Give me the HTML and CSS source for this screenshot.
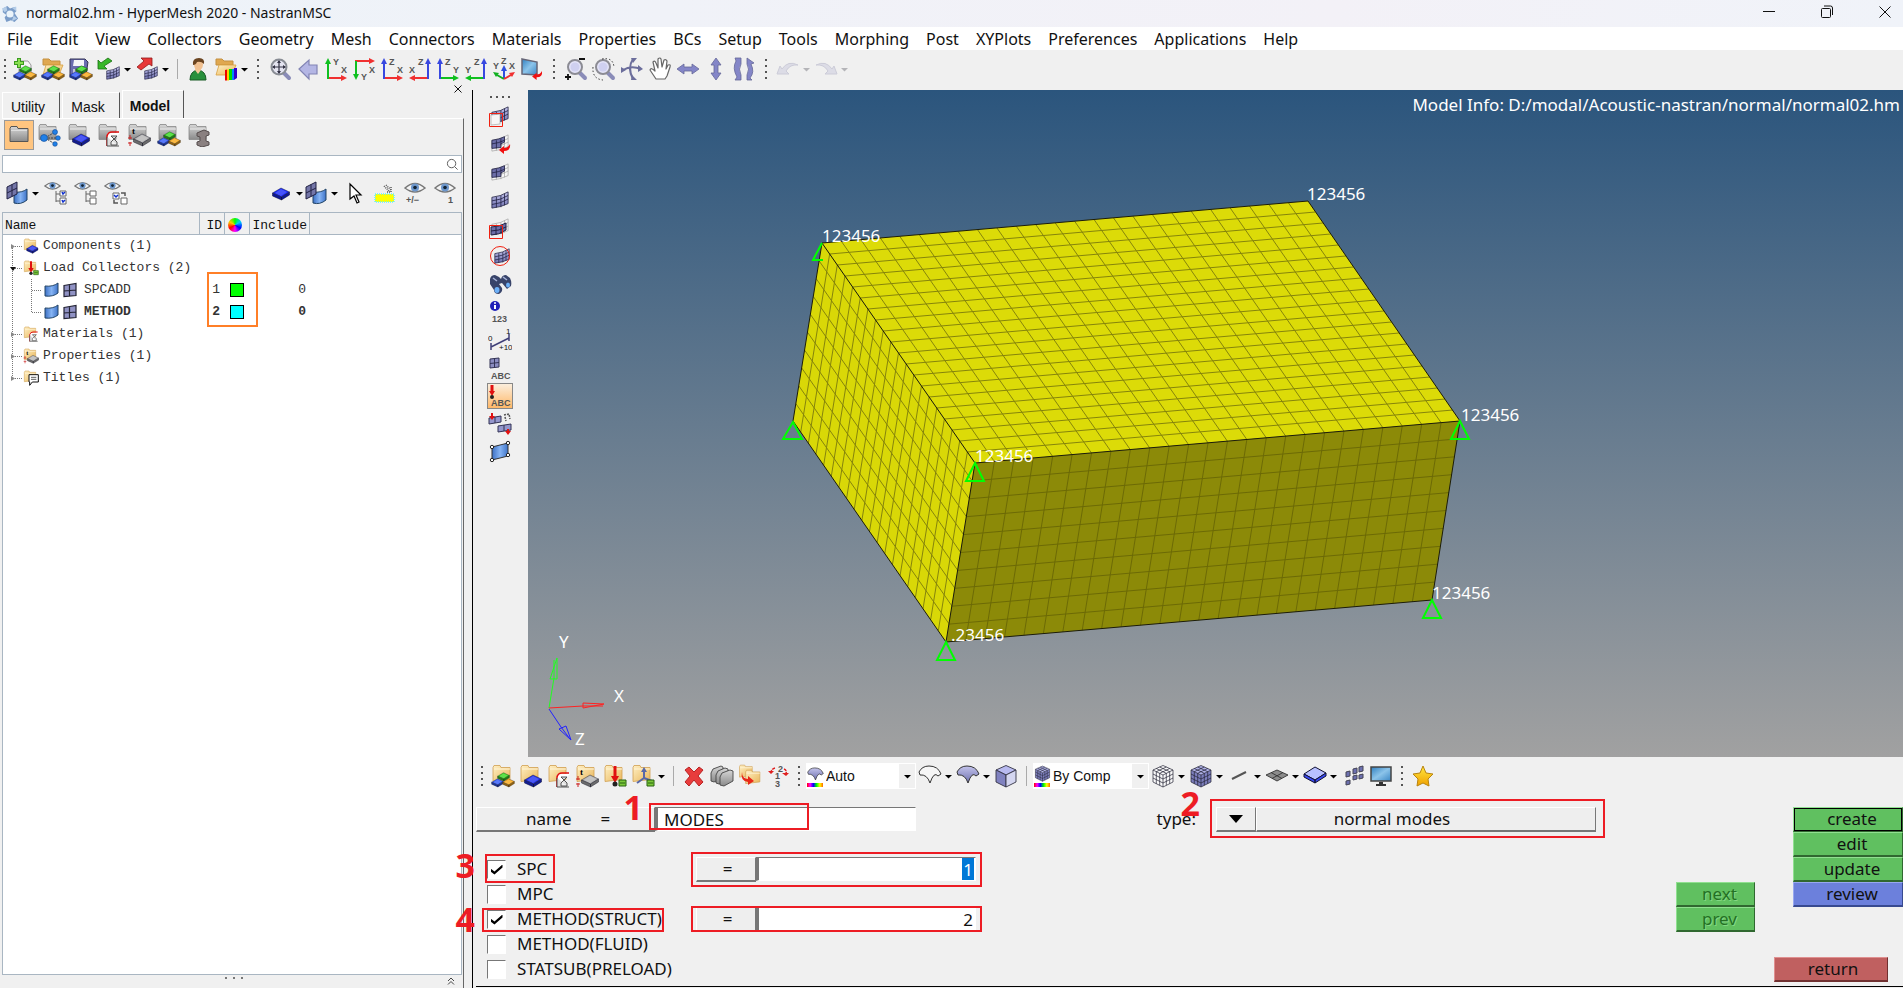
FILE: index.html
```html
<!DOCTYPE html>
<html lang="en">

<head>
    <meta charset="UTF-8">
    <meta name="viewport" content="width=device-width, initial-scale=1.0">
    <title>normal02.hm - HyperMesh 2020 - NastranMSC</title>
    <link rel="stylesheet" href="styles.css">
</head>

<body>
    <!-- shared gradients, kept out of the hidden sprite so that fills resolve -->
    <svg class="defs" xmlns="http://www.w3.org/2000/svg" aria-hidden="true">
        <defs>
            <linearGradient id="g-yellow" x1="0" y1="0" x2="1" y2="1"><stop offset="0" stop-color="#fff0c4"/><stop offset="1" stop-color="#e9b65a"/></linearGradient>
            <linearGradient id="g-grey" x1="0" y1="0" x2="0" y2="1"><stop offset="0" stop-color="#d6d6d6"/><stop offset="1" stop-color="#8a8a8a"/></linearGradient>
            <linearGradient id="g-lav" x1="0" y1="0" x2="0" y2="1"><stop offset="0" stop-color="#c4c4ec"/><stop offset="1" stop-color="#6e70ae"/></linearGradient>
            <linearGradient id="g-blue" x1="0" y1="0" x2="1" y2="0"><stop offset="0" stop-color="#3c70c4"/><stop offset=".5" stop-color="#86b4f4"/><stop offset="1" stop-color="#3f74c8"/></linearGradient>
            <linearGradient id="g-rain" x1="0" y1="0" x2="1" y2="0"><stop offset="0" stop-color="#f00"/><stop offset=".2" stop-color="#f0f"/><stop offset=".4" stop-color="#00f"/><stop offset=".6" stop-color="#0f0"/><stop offset=".8" stop-color="#ff0"/><stop offset="1" stop-color="#f60"/></linearGradient>
            <linearGradient id="g-screen" x1="0" y1="0" x2="1" y2="1"><stop offset="0" stop-color="#2f7fc0"/><stop offset=".5" stop-color="#8cc4ea"/><stop offset="1" stop-color="#3a86c4"/></linearGradient>
            <linearGradient id="g-star" x1="0" y1="0" x2="0" y2="1"><stop offset="0" stop-color="#ffe840"/><stop offset="1" stop-color="#f0a000"/></linearGradient>
        </defs>
    </svg>

    <!-- icon sprite -->
    <svg class="sprite" xmlns="http://www.w3.org/2000/svg" aria-hidden="true">
        <!-- parts -->
        <symbol id="caret" viewBox="0 0 12 24"><path d="M3 11h7l-3.500 3.500z"/></symbol>
        <symbol id="slab" viewBox="0 0 18 13" overflow="visible">
            <path d="M.500 6l8.500-5 8.500 4-8 5z" fill="currentColor" stroke="#112" stroke-opacity=".6" stroke-width=".7"/>
            <path d="M.500 6l9 4v3l-9-4zM17.500 5l-8 5v3l8-5z" fill="currentColor"/>
            <path d="M.500 6l9 4v3l-9-4zM17.500 5l-8 5v3l8-5z" fill="#000" fill-opacity=".4" stroke="#112" stroke-opacity=".6" stroke-width=".7"/>
            <path d="M3 6l6-4 6 3-6 4z" fill="#fff" opacity=".2"/>
        </symbol>
        <symbol id="folder" viewBox="0 0 24 24"><path d="M2 3.500l1-2h6l1 2h9v12l-17 2z" fill="url(#g-yellow)" stroke="#d0a050" stroke-width=".8"/><path d="M3 5h16" stroke="#fff5d8"/></symbol>
        <symbol id="folder-grey" viewBox="0 0 24 24"><path d="M2 3.500l1-2h6l1 2h9v13h-17z" fill="url(#g-grey)" stroke="#888" stroke-width=".8"/><path d="M3 6h16" stroke="#eee"/></symbol>
        <symbol id="folder-dark" viewBox="0 0 24 24"><path d="M3 5.500l1-2h6l1 2h10v13h-18z" fill="url(#g-grey)" stroke="#555"/><path d="M4 7.500h16" stroke="#ddd"/></symbol>
        <symbol id="cubes" viewBox="0 0 24 24" overflow="visible">
            <use href="#slab" x="6" y="8" width="13" height="9" color="#38d820"/>
            <use href="#slab" x="0" y="14" width="13" height="9" color="#3058f8"/>
            <use href="#slab" x="11" y="14" width="13" height="9" color="#f8a818"/>
        </symbol>
        <symbol id="beaker" viewBox="0 0 24 24"><path d="M10 22V10h13" fill="#fff" stroke="none"/><path d="M10 23V13q1-4 5-4h7" fill="none" stroke="#e01010" stroke-width="1.500"/><path d="M10 14v9h12M14 22v-3l3-3-3-3h6l-3 3 3 3v3z" fill="#ddd" stroke="#444" stroke-width=".9"/></symbol>
        <symbol id="prop" viewBox="0 0 24 24"><text class="ic-s" x="5" y="11">t</text><path d="M3 12v4m-2-1h4M3 23v-4m-2 1h4" stroke="#c22" fill="none"/><use href="#slab" x="6" y="10" width="18" height="13" color="#b4b4b4"/></symbol>
        <symbol id="patch" viewBox="0 0 20 20">
            <path d="M1 7q10-1 18-6v13q-8 4-18 5z" fill="url(#g-lav)" stroke="#224" stroke-width=".9"/>
            <path d="M1 11q10-1 18-6M1 15q10-1 18-6M6 6.500v12M11 5v13M15 3v13" fill="none" stroke="#224" stroke-width=".9"/>
        </symbol>
        <symbol id="patch-wire" viewBox="0 0 20 20">
            <path d="M1 7q10-1 18-6v13q-8 4-18 5zM1 11q10-1 18-6M1 15q10-1 18-6M6 6.500v12M11 5v13M15 3v13" fill="#f6f6f6" stroke="#999" stroke-width=".7"/>
        </symbol>
        <symbol id="patch-part" viewBox="0 0 20 20">
            <use href="#patch-wire" width="20" height="20"/>
            <path d="M1 7q8-1 14-4v6l-4 2v4l-10 1z" fill="#6c6ea8" stroke="#224" stroke-width=".9"/><path d="M1 11q8-1 14-4M6 7v9M11 5v7" fill="none" stroke="#224" stroke-width=".9"/>
        </symbol>
        <symbol id="red-check" viewBox="0 0 12 10"><path d="M11 0q1 7-6 7v3L0 6l5-4v2q4 0 6-4z" fill="#f01010"/></symbol>
        <symbol id="eye" viewBox="0 0 22 12"><path d="M1 6q10-9 20 0-10 8-20 0z" fill="#f4f4f4" stroke="#777" stroke-width="1.500"/><circle cx="11" cy="5.500" r="4" fill="#6c96cc"/><circle cx="11" cy="5.500" r="1.800" fill="#123"/></symbol>
        <symbol id="lens" viewBox="0 0 24 24"><path d="M15 15l6 6" stroke="#8a8cb8" stroke-width="4" stroke-linecap="round"/><circle cx="11" cy="10" r="7" fill="#e4e4f8" stroke="#8c8c94" stroke-width="2"/><circle cx="11" cy="10" r="4.500" fill="#cfd0f0"/></symbol>
        <symbol id="cube" viewBox="0 0 24 24" stroke="#334" stroke-width=".9" stroke-linejoin="round"><path d="M12 1.500l10 4.500-10 5-10-5z" fill="#b8baf0"/><path d="M2 6l10 5v12l-10-5z" fill="#8082c0"/><path d="M22 6l-10 5v12l10-5z" fill="#d4d6f0"/></symbol>
        <symbol id="cube-lines" viewBox="0 0 24 24" fill="none" stroke-linejoin="round"><path d="M12 1.500l10 4.500v12l-10 5-10-5V6zM2 6l10 5 10-5M12 11v12M2 10l10 5 10-5M2 14l10 5 10-5M5.300 7.700v12M8.700 9.300v12M15.300 9.300v12M18.700 7.700v12M8.700 3l10 4.700M5.300 4.500l10 4.800M15.300 3l-10 4.700M18.700 4.500l-10 4.800" stroke="#223" stroke-width=".7"/></symbol>
        <symbol id="cube-mesh" viewBox="0 0 24 24"><path d="M12 1.500l10 4.500-10 5-10-5z" fill="#b0b2e8"/><path d="M2 6l10 5 10-5v12l-10 5-10-5z" fill="#7c7ebc"/><use href="#cube-lines" width="24" height="24"/></symbol>
        <symbol id="surf" viewBox="0 0 24 24"><path d="M1 8Q4 2 11 2q9 0 12 8l-3 2q-4-5-8 7Q9 10 2 11z" stroke="#333" stroke-width="1"/></symbol>

        <!-- file toolbar -->
        <symbol id="i-new" viewBox="0 0 24 24"><path d="M6 4h9l3 4v12H6z" fill="#f6f6f6" stroke="#999"/><path d="M6 1v10M1 6h10" stroke="#3a9a20" stroke-width="4"/><path d="M6 2v8M2 6h8" stroke="#8ade50" stroke-width="2"/><use href="#cubes" width="24" height="24"/></symbol>
        <symbol id="i-open" viewBox="0 0 24 24"><path d="M2 2h6l2 2h9v4H2z" fill="#e0a850" stroke="#c49040"/><path d="M2 18l3-10h17l-4 10z" fill="url(#g-yellow)" stroke="#d8a040" stroke-width=".8"/><use href="#cubes" width="24" height="24"/></symbol>
        <symbol id="i-save" viewBox="0 0 24 24"><path d="M1 2h15l3 3-2 13H1z" fill="#6a6cb0" stroke="#335"/><path d="M5 3h10v6H4z" fill="#f4f4fa"/><path d="M4 12h9v6H4z" fill="#c0c0dc"/><use href="#cubes" width="24" height="24"/></symbol>
        <symbol id="i-import" viewBox="0 0 24 24"><use href="#patch" x="9" y="8" width="14" height="16"/><path d="M1 12V3l3 3 7-5 4 3-8 5 3 3z" fill="#38b828" stroke="#187010" stroke-width=".8"/></symbol>
        <symbol id="i-export" viewBox="0 0 24 24"><use href="#patch" x="9" y="8" width="14" height="16"/><path d="M17 1v8l-3-2-8 6-4-3 7-6-3-3z" fill="#e83838" stroke="#901818" stroke-width=".8"/></symbol>
        <symbol id="i-user" viewBox="0 0 24 24"><path d="M4 23q0-9 8-10 8 1 8 10z" fill="#28903c" stroke="#185a24"/><path d="M9 13l3 4 3-4v-3H9z" fill="#f4c898"/><ellipse cx="12.500" cy="7.500" rx="4.500" ry="5.500" fill="#f0c090"/><path d="M7 8q-1-7 6-7 6 0 5 6-3-3-7-2-1 3-4 3z" fill="#6a4420"/></symbol>
        <symbol id="i-spectrum" viewBox="0 0 24 24"><path d="M2 2h6l2 2h9v4H2z" fill="#e0a850" stroke="#c49040"/><path d="M2 18l3-10h17l-4 10z" fill="url(#g-yellow)" stroke="#d8a040" stroke-width=".8"/><g transform="translate(11 12)"><path d="M0 1l2-.500v11H0z" fill="#e00"/><path d="M2 .500h2v11H2z" fill="#fc0"/><path d="M4 0h3v11H4z" fill="#0d0"/><path d="M7 0h2v11H7z" fill="#08f"/><path d="M9-1h3v10L9 11z" fill="#30c"/></g></symbol>

        <!-- view toolbar -->
        <symbol id="i-fit" viewBox="0 0 24 24"><path d="M15 15l6 6" stroke="#8a8cb8" stroke-width="4" stroke-linecap="round"/><circle cx="11" cy="10" r="7.500" fill="#e4e4f0" stroke="#888c94" stroke-width="2"/><path d="M11 4v12M5 10h12" stroke="#334" stroke-width="1.200"/><path d="M9 6l2-3 2 3zM9 14l2 3 2-3zM7 8l-3 2 3 2zM15 8l3 2-3 2z" fill="#334"/></symbol>
        <symbol id="i-back" viewBox="0 0 24 24"><path d="M3 12l10-9v5h8v9h-8v5z" fill="#b4b6e4" stroke="#8284b4" stroke-width="1.200"/></symbol>
        <symbol id="ax-v" viewBox="0 0 24 24"><path d="M4 22V6" stroke-width="2"/><path d="M1 7l3-6 3 6z" stroke="none"/></symbol>
        <symbol id="ax-h" viewBox="0 0 24 24"><path d="M3 21h15" stroke-width="2"/><path d="M17 18l6 3-6 3z" stroke="none"/></symbol>
        <symbol id="i-xy" viewBox="0 0 24 24"><use href="#ax-h" class="ax-r" width="24" height="24"/><use href="#ax-v" class="ax-g" width="24" height="24"/><text class="ax-t" x="9" y="8">Y</text><text class="ax-t" x="17" y="16">X</text></symbol>
        <symbol id="i-xy2" viewBox="0 0 24 24"><path d="M3 4h16" stroke="#f03030" stroke-width="2"/><path d="M17 1l6 3-6 3z" fill="#f03030"/><path d="M4 4v14" stroke="#10c020" stroke-width="2"/><path d="M1 17l3 6 3-6z" fill="#10c020"/><text class="ax-t" x="9" y="23">Y</text><text class="ax-t" x="17" y="16">X</text></symbol>
        <symbol id="i-zx" viewBox="0 0 24 24"><use href="#ax-h" class="ax-r" width="24" height="24"/><use href="#ax-v" class="ax-b" width="24" height="24"/><text class="ax-t" x="9" y="8">Z</text><text class="ax-t" x="17" y="16">X</text></symbol>
        <symbol id="i-xz" viewBox="0 0 24 24"><g transform="matrix(-1 0 0 1 24 0)"><use href="#ax-h" class="ax-r" width="24" height="24"/><use href="#ax-v" class="ax-b" width="24" height="24"/></g><text class="ax-t" x="10" y="8">Z</text><text class="ax-t" x="1" y="16">X</text></symbol>
        <symbol id="i-zy" viewBox="0 0 24 24"><use href="#ax-h" class="ax-g" width="24" height="24"/><use href="#ax-v" class="ax-b" width="24" height="24"/><text class="ax-t" x="9" y="8">Z</text><text class="ax-t" x="17" y="16">Y</text></symbol>
        <symbol id="i-yz" viewBox="0 0 24 24"><g transform="matrix(-1 0 0 1 24 0)"><use href="#ax-h" class="ax-g" width="24" height="24"/><use href="#ax-v" class="ax-b" width="24" height="24"/></g><text class="ax-t" x="10" y="8">Z</text><text class="ax-t" x="1" y="16">Y</text></symbol>
        <symbol id="i-iso" viewBox="0 0 24 24"><path d="M12 22V12" stroke="#3050e0" stroke-width="2"/><path d="M9 14l3-6 3 6z" fill="#3050e0"/><path d="M12 22l-7-4" stroke="#10b020" stroke-width="2"/><path d="M1 15l6 1-3 4z" fill="#10b020"/><path d="M12 22l7-4" stroke="#f03030" stroke-width="2"/><path d="M23 15l-6 1 3 4z" fill="#f03030"/><text class="ax-t" x="9" y="7">Z</text><text class="ax-t" x="1" y="12">Y</text><text class="ax-t" x="17" y="12">X</text></symbol>
        <symbol id="i-view" viewBox="0 0 24 24"><path d="M2 2l15 3v13l-15-1z" fill="url(#g-screen)" stroke="#667" stroke-width="1.500"/><use href="#red-check" x="12" y="14" width="11" height="9"/></symbol>
        <symbol id="i-zoom" viewBox="0 0 24 24"><use href="#lens" width="24" height="24"/><path d="M15 2h6M1 20h6M4 17v6" stroke="#111" stroke-width="1.800"/></symbol>
        <symbol id="i-zoomw" viewBox="0 0 24 24"><use href="#lens" width="24" height="24"/><path d="M10 2q11-2 12 8M1 10q-1 12 10 13" fill="none" stroke="#333" stroke-dasharray="1.500 2"/></symbol>
        <symbol id="i-rotate" viewBox="0 0 24 24"><path d="M13 2q-6 9 0 20M3 13q8-5 18-1" fill="none" stroke="#6c6e9c" stroke-width="2"/><path d="M11 1h6l-4 5zM11 23h6l-5-5zM1 10v6l5-3zM23 12l-5-4v7z" fill="#6c6e9c"/></symbol>
        <symbol id="i-hand" viewBox="0 0 24 24"><path d="M8 22l-6-9q1-3 5 1L5 5q2-2 3 1l2 5V2q2-2 3 0l1 8 2-7q2-1 3 1l-1 8 2-4q3-1 2 2l-3 9-2 3z" fill="#fff" stroke="#666" stroke-width="1.200" stroke-linejoin="round"/></symbol>
        <symbol id="i-lr" viewBox="0 0 24 24"><path d="M1 12l7-5v3h8V7l7 5-7 5v-3H8v3z" fill="#8486c8" stroke="#666898" stroke-width=".8"/></symbol>
        <symbol id="i-ud" viewBox="0 0 24 24"><path d="M12 1l5 7h-3v8h3l-5 7-5-7h3V8H7z" fill="#8486c8" stroke="#666898" stroke-width=".8"/></symbol>
        <symbol id="i-spin" viewBox="0 0 24 24"><path d="M9 1v6q-3 5 0 11v5H3l2-3Q0 11 4 4L3 1zM15 1l7 5-3 1q4 8-1 14l2 2h-5v-5q3-6 0-11z" fill="#8486c8" stroke="#666898" stroke-width=".8"/></symbol>
        <symbol id="i-undo" viewBox="0 0 24 24"><path d="M1 17l3-8 2 3q6-9 16-4-8-1-12 6l3 3z" fill="#dcdce6" stroke="#ccccd8"/></symbol>
        <symbol id="i-redo" viewBox="0 0 24 24"><path d="M23 17l-3-8-2 3Q12 3 2 8q8-1 12 6l-3 3z" fill="#dcdce6" stroke="#ccccd8"/></symbol>

        <!-- browser toolbar -->
        <symbol id="i-net" viewBox="0 0 24 24"><use href="#folder-grey" width="24" height="24"/><path d="M8 15l10-6M8 15h11M8 15l10 6" stroke="#444" stroke-dasharray="2 1"/><g fill="#2080e8" stroke="#104890" stroke-width=".6"><circle cx="7" cy="15" r="3.500"/><circle cx="18" cy="9" r="2.500"/><circle cx="21" cy="15" r="2.300"/><circle cx="18" cy="21" r="2.300"/></g></symbol>
        <symbol id="i-gcomp" viewBox="0 0 24 24"><use href="#folder-grey" width="24" height="24"/><use href="#slab" x="5" y="10" width="18" height="13" color="#2030f0"/></symbol>
        <symbol id="i-gmat" viewBox="0 0 24 24"><use href="#folder-grey" width="24" height="24"/><use href="#beaker" width="24" height="24"/></symbol>
        <symbol id="i-gprop" viewBox="0 0 24 24"><use href="#folder-grey" width="24" height="24"/><use href="#prop" width="24" height="24"/></symbol>
        <symbol id="i-gcubes" viewBox="0 0 24 24"><use href="#folder-grey" width="24" height="24"/><use href="#cubes" width="24" height="24"/></symbol>
        <symbol id="i-gbeam" viewBox="0 0 24 24"><use href="#folder-grey" width="24" height="24"/><path d="M10 10l7-3 5 2v3l-3 1v5l3 1v3l-7 2-5-2v-3l3-1v-4l-3-1z" fill="#8a8080" stroke="#554c4c"/></symbol>
        <symbol id="i-both" viewBox="0 0 24 24"><path d="M9 11q8 1 13-3v11q-6 5-13 3z" fill="url(#g-blue)" stroke="#246"/><path d="M2 6l10-5v12l-10 5z" fill="#7476a8" stroke="#224"/><path d="M7 3.500v12M2 12l10-5" stroke="#224"/></symbol>
        <symbol id="i-eyetree" viewBox="0 0 24 24"><use href="#eye" x="0" y="0" width="17" height="10"/><path d="M12 10v11M12 13h4M12 20h4" stroke="#666" fill="none"/><path d="M16 10h6v5h-6zM16 17h6v6h-6z" fill="#fff" stroke="#666"/></symbol>
        <symbol id="i-eyetree2" viewBox="0 0 24 24"><use href="#i-eyetree" width="24" height="24"/><path d="M18 11l1 2 2-2M18 19l1 2 2-2" stroke="#1030d0" stroke-width="1.500" fill="none"/></symbol>
        <symbol id="i-eyerev" viewBox="0 0 24 24"><use href="#eye" x="0" y="0" width="17" height="10"/><path d="M9 12h6v6H9zM17 17h6v6h-6z" fill="#fff" stroke="#666"/><path d="M10 14l2 2 2-2" stroke="#1030d0" stroke-width="1.500" fill="none"/><path d="M17 12h4v3M14 22h-4v-3" fill="none" stroke="#555" stroke-width="1.500"/></symbol>
        <symbol id="i-slab" viewBox="0 0 24 24"><use href="#slab" x="3" y="6" width="18" height="13" color="#1828f8"/></symbol>
        <symbol id="i-cursor" viewBox="0 0 24 24"><path d="M7 3v15l4-3 3 7 2-1-3-7h5z" fill="#fff" stroke="#000" stroke-width="1.200"/></symbol>
        <symbol id="i-mark" viewBox="0 0 24 24"><path d="M2 13h19v8H2z" fill="#ff0" stroke="#6ef" stroke-dasharray="1 1" stroke-width="1.500"/><path d="M11 5l5 5M13 4l5 5M18 6v5h-5" stroke="#555" stroke-dasharray="1 1" stroke-width="1.500" fill="none"/></symbol>
        <symbol id="i-eyepm" viewBox="0 0 24 24"><use href="#eye" x="1" y="1" width="22" height="12"/><text class="ic-t" x="3" y="22">+/−</text></symbol>
        <symbol id="i-eye1" viewBox="0 0 24 24"><use href="#eye" x="1" y="1" width="22" height="12"/><text class="ic-t" x="15" y="22">1</text></symbol>

        <!-- display toolbar (vertical) -->
        <symbol id="i-v1" viewBox="0 0 24 24"><use href="#patch" x="3" y="1" width="18" height="20"/><path d="M3 11l9-1v10l-9 1z" fill="#f6f6f6" stroke="#aaa" stroke-width=".7"/><path d="M1.500 9.500h13v13h-13z" fill="none" stroke="#f02010"/></symbol>
        <symbol id="i-v2" viewBox="0 0 24 24"><use href="#patch-part" x="3" y="1" width="18" height="20"/><use href="#red-check" x="11" y="12" width="12" height="10"/></symbol>
        <symbol id="i-v3" viewBox="0 0 24 24"><use href="#patch-part" x="3" y="2" width="18" height="20"/></symbol>
        <symbol id="i-v4" viewBox="0 0 24 24"><use href="#patch" x="3" y="2" width="18" height="20"/></symbol>
        <symbol id="i-v5" viewBox="0 0 24 24"><use href="#patch-wire" x="3" y="1" width="18" height="20"/><path d="M3 11q8 0 15-4v7q-7 5-15 5z" fill="#6c6ea8" stroke="#224"/><path d="M3 15q8 0 15-4M8 11v8M13 9v9" stroke="#224" fill="none"/><path d="M1.500 9.500h13v13h-13z" fill="none" stroke="#f02010"/></symbol>
        <symbol id="i-v6" viewBox="0 0 24 24"><use href="#patch" x="6" y="2" width="16" height="20"/><circle cx="12" cy="12" r="9.500" fill="none" stroke="#f02010"/></symbol>
        <symbol id="i-v7" viewBox="0 0 24 24"><path d="M2 7q1-4 5-4l4 2 2 2q1-4 5-4l4 3q2 4 1 8l-4 3-5-6-3 1 3 4q1 4-3 6-5 0-5-4l-4-6z" fill="#38446a"/><path d="M5 6l4 3M15 5l4 3" stroke="#a8b4d8" stroke-width="1.500"/><ellipse cx="9" cy="18" rx="2.500" ry="3" fill="#6cb0f8"/><ellipse cx="20" cy="13" rx="2" ry="2.500" fill="#6cb0f8"/></symbol>
        <symbol id="i-v8" viewBox="0 0 24 24"><circle cx="7" cy="6" r="5" fill="#2020b8"/><path d="M7 5v4" stroke="#fff" stroke-width="2"/><circle cx="7" cy="3" r="1" fill="#fff"/><text class="ic-t" x="4" y="22">123</text></symbol>
        <symbol id="i-v9" viewBox="0 0 24 24"><path d="M3 15v7M21 6v7M3 19l18-9" stroke="#404078" stroke-width="1.500"/><text class="ic-n" x="0" y="13">0</text><text class="ic-n" x="18" y="6">1</text><text class="ic-n" x="11" y="22">+10'</text></symbol>
        <symbol id="i-v10" viewBox="0 0 24 24"><path d="M2 3l9-1v9l-9 1zM6.500 2.500v9M2 7.500l9-1" fill="#8a8cc0" stroke="#335"/><text class="ic-t" x="3" y="23">ABC</text></symbol>
        <symbol id="i-v11" viewBox="0 0 24 24"><path d="M4 1v7" stroke="#e01010" stroke-width="3"/><path d="M1 7h6l-3 5z" fill="#e01010"/><circle cx="4" cy="13" r="2" fill="#222"/><text class="ic-t" x="3" y="22">ABC</text></symbol>
        <symbol id="i-v12" viewBox="0 0 24 24"><path d="M1 6l12-2v6l-12 2zM7 5v6M10 14l13-2v6l-13 2zM16 13v6" fill="#9496cc" stroke="#335"/><path d="M4 1v3M20 17v3" stroke="#e01010" stroke-width="2"/><path d="M1 4h6l-3 4zM17 19h6l-3 4z" fill="#e01010"/><path d="M16 3l5-1 1 5M17 5l1 4" fill="none" stroke="#555" stroke-dasharray="2 1" stroke-width="1.500"/></symbol>
        <symbol id="i-v13" viewBox="0 0 24 24"><path d="M4 7l16-4v13l-16 4z" fill="url(#g-blue)" stroke="#333"/><g fill="#fff" stroke="#222"><circle cx="4" cy="7" r="1.700"/><circle cx="20" cy="3" r="1.700"/><circle cx="20" cy="15" r="1.700"/><circle cx="4" cy="20" r="1.700"/></g></symbol>

        <!-- collector toolbar -->
        <symbol id="i-ycubes" viewBox="0 0 24 24"><use href="#folder" width="24" height="24"/><use href="#cubes" width="24" height="24"/></symbol>
        <symbol id="i-ycomp" viewBox="0 0 24 24"><use href="#folder" width="24" height="24"/><use href="#slab" x="5" y="10" width="18" height="13" color="#2030f0"/></symbol>
        <symbol id="i-ymat" viewBox="0 0 24 24"><use href="#folder" width="24" height="24"/><use href="#beaker" width="24" height="24"/></symbol>
        <symbol id="i-yprop" viewBox="0 0 24 24"><use href="#folder" width="24" height="24"/><use href="#prop" width="24" height="24"/></symbol>
        <symbol id="i-yload" viewBox="0 0 24 24"><use href="#folder" width="24" height="24"/><path d="M12 2v12" stroke="#e01010" stroke-width="3"/><path d="M8 12h8l-4 7z" fill="#e01010"/><circle cx="12" cy="20" r="2.500" fill="#222"/><path d="M16 16h7v6h-7z" fill="#7ac838" stroke="#286010"/><path d="M17 19h5" stroke="#286010"/></symbol>
        <symbol id="i-ysys" viewBox="0 0 24 24"><use href="#folder" width="24" height="24"/><path d="M13 6v8l-7 5M13 14l8 3" fill="none" stroke="#5868a8" stroke-width="2"/><path d="M10 8l3-5 3 5z" fill="#5868a8"/><path d="M16 16h7v6h-7z" fill="#7ac838" stroke="#286010"/><path d="M17 19h5" stroke="#286010"/></symbol>
        <symbol id="i-ytitle" viewBox="0 0 24 24"><use href="#folder" width="24" height="24"/><path d="M9 7h14v11h-9l-4 5v-5H9z" fill="#fff" stroke="#111" stroke-width="1.500"/><path d="M12 11h8M12 14h8" stroke="#111"/></symbol>
        <symbol id="i-del" viewBox="0 0 24 24"><path d="M3 6l4-3 5 5 5-5 4 3-5 6 5 6-4 4-5-6-5 6-4-4 5-6z" fill="#e83c3c" stroke="#b82424"/></symbol>
        <symbol id="i-stack" viewBox="0 0 24 24" fill="url(#g-grey)" stroke="#444" stroke-width=".9"><path d="M1 9l2-4 8-3 2 1v11l-9 4-3-1z"/><path d="M6 11l2-4 7-3 3 1v11l-9 4-3-1z"/><path d="M10 13l2-4 8-3 3 1v10l-9 5-4-1z"/></symbol>
        <symbol id="i-move" viewBox="0 0 24 24"><use href="#folder" width="18" height="18"/><use href="#folder" x="6" y="5" width="20" height="20"/><path d="M4 8q0 7 6 7v-3l6 5-6 4v-3q-8-1-6-10z" fill="#e82818"/></symbol>
        <symbol id="i-num" viewBox="0 0 24 24"><text class="ax-t" x="12" y="8">2</text><text class="ax-t" x="9" y="15">1</text><text class="ax-t" x="9" y="23">3</text><path d="M9 4q-4 1-4 5M18 5q3 1 2 5" fill="none" stroke="#e02020" stroke-width="1.500" stroke-dasharray="3 1"/><path d="M2 7h6l-3 3zM16 9h7l-3 3z" fill="#e02020"/></symbol>
        <symbol id="i-surfw" viewBox="0 0 24 24"><use href="#surf" fill="#f6f6f6" width="24" height="24"/></symbol>
        <symbol id="i-surfb" viewBox="0 0 24 24"><use href="#surf" fill="url(#g-lav)" width="24" height="24"/></symbol>
        <symbol id="i-auto" viewBox="0 0 20 24"><use href="#surf" fill="url(#g-lav)" x="1" y="2" width="17" height="18"/><path d="M1 19h16v4H1z" fill="url(#g-rain)"/></symbol>
        <symbol id="i-bycomp" viewBox="0 0 20 24"><use href="#cube-mesh" x="1" y="1" width="17" height="17"/><path d="M1 19h16v4H1z" fill="url(#g-rain)"/></symbol>
        <symbol id="i-cubew" viewBox="0 0 24 24"><path d="M12 1.500l10 4.500v12l-10 5-10-5V6z" fill="#fafafa"/><use href="#cube-lines" width="24" height="24"/></symbol>
        <symbol id="i-line" viewBox="0 0 24 24"><path d="M5 15l14-7" stroke="#555" stroke-width="2"/></symbol>
        <symbol id="i-flat" viewBox="0 0 24 24"><path d="M1 11l11-5 11 5-11 6zM6 8.500l11 6M18 8.500l-11 6" fill="#8c8c8c" stroke="#333" stroke-width=".9"/></symbol>
        <symbol id="i-plate" viewBox="0 0 24 24"><path d="M1 10l11-7 11 6-11 7z" fill="#b8c0ff" stroke="#113"/><path d="M1 10l11 6v3l-11-6zM23 9l-11 7v3l11-7z" fill="#3848f0" stroke="#113"/></symbol>
        <symbol id="i-quads" viewBox="0 0 24 24"><path d="M12 5l4-1v5l-4 1zM18 3l4-1v5l-4 1zM5 8l4-1v5l-4 1zM12 12l4-1v4l-4 1zM18 11l4-1v4l-4 1zM5 17l4-1v4l-4 1z" fill="#6c70b0" stroke="#445"/></symbol>
        <symbol id="i-monitor" viewBox="0 0 24 24"><path d="M2 3h20v14H2z" fill="url(#g-screen)" stroke="#444" stroke-width="1.500"/><path d="M10 18h4v2h3v2H7v-2h3z" fill="#333"/></symbol>
        <symbol id="i-star" viewBox="0 0 24 24"><path d="M12 2l3 7 7 1-5 5 1 7-6-3-6 3 1-7-5-5 7-1z" fill="url(#g-star)" stroke="#b88410"/></symbol>

        <!-- tree -->
        <symbol id="t-geo" viewBox="0 0 16 16"><path d="M1 4q8 1 13-3v10q-5 4-13 3z" fill="url(#g-blue)" stroke="#246"/></symbol>
        <symbol id="t-mesh" viewBox="0 0 16 16"><path d="M2 3.500l12-2v12l-12 1zM7.500 2.500v12M2 9l12-1" fill="#9092c4" stroke="#223" stroke-width="1.200"/></symbol>
        <symbol id="twig" viewBox="0 0 20 22"><path d="M9.500 0v22M10 11.500h10" fill="none" stroke="#777" stroke-dasharray="1 1"/></symbol>
        <symbol id="twig-first" viewBox="0 0 20 22"><path d="M9.500 11v11M10 11.500h10" fill="none" stroke="#777" stroke-dasharray="1 1"/><path d="M8 9l4 2.500-4 2.500z" fill="#888"/></symbol>
        <symbol id="twig-shut" viewBox="0 0 20 22"><use href="#twig" width="20" height="22"/><path d="M8 9l4 2.500-4 2.500z" fill="#888"/></symbol>
        <symbol id="twig-open" viewBox="0 0 20 22"><use href="#twig" width="20" height="22"/><path d="M7 10h6l-3 4z" fill="#111"/></symbol>
        <symbol id="twig-last" viewBox="0 0 20 22"><path d="M9.500 0v11M10 11.500h10" fill="none" stroke="#777" stroke-dasharray="1 1"/><path d="M8 9l4 2.500-4 2.500z" fill="#888"/></symbol>
        <symbol id="twig-child" viewBox="0 0 41 22"><path d="M9.500 0v22M28.500 0v22M29 11.500h9" fill="none" stroke="#777" stroke-dasharray="1 1"/></symbol>
        <symbol id="twig-end" viewBox="0 0 41 22"><path d="M9.500 0v22M28.500 0v11M29 11.500h9" fill="none" stroke="#777" stroke-dasharray="1 1"/></symbol>
    </svg>

    <header class="titlebar">
        <svg class="logo" viewBox="0 0 20 20"><path d="M2 4l5-3 3 3 6-2 1 5-2 2 4 6-4 4-4-2-5 2-2-5 2-3-4-3z" fill="#7a9cc8"/><path d="M1 4l5-2 1 4-3 2zM12 18l6-3-4-3zM12 3l5-1v5z" fill="#b4cde8"/><circle cx="10" cy="10" r="4" fill="#eaf3fa"/></svg>
        <h1>normal02.hm - HyperMesh 2020 - NastranMSC</h1>
        <div class="window-buttons">
            <button aria-label="Minimize"><svg viewBox="0 0 14 14"><path d="M1 6.500h12"/></svg></button>
            <button aria-label="Restore"><svg viewBox="0 0 14 14"><rect x="1.500" y="3.500" width="9" height="9" rx="1"/><path d="M4 1h6.500q2 0 2 2v7"/></svg></button>
            <button aria-label="Close"><svg viewBox="0 0 14 14"><path d="M1.500 1.500l11 11M12.500 1.500l-11 11"/></svg></button>
        </div>
    </header>

    <nav class="menubar">
        <a href="#">File</a><a href="#">Edit</a><a href="#">View</a><a href="#">Collectors</a><a href="#">Geometry</a><a href="#">Mesh</a><a href="#">Connectors</a><a href="#">Materials</a><a href="#">Properties</a><a href="#">BCs</a><a href="#">Setup</a><a href="#">Tools</a><a href="#">Morphing</a><a href="#">Post</a><a href="#">XYPlots</a><a href="#">Preferences</a><a href="#">Applications</a><a href="#">Help</a>
    </nav>

    <div class="toolbar main-tools">
        <i class="grip"></i>
        <button class="tool" aria-label="New"><svg><use href="#i-new"/></svg></button>
        <button class="tool" aria-label="Open"><svg><use href="#i-open"/></svg></button>
        <button class="tool" aria-label="Save"><svg><use href="#i-save"/></svg></button>
        <button class="tool drop" aria-label="Import"><svg><use href="#i-import"/></svg><svg class="caret"><use href="#caret"/></svg></button>
        <button class="tool drop" aria-label="Export"><svg><use href="#i-export"/></svg><svg class="caret"><use href="#caret"/></svg></button>
        <i class="sep"></i>
        <button class="tool" aria-label="User profile"><svg><use href="#i-user"/></svg></button>
        <button class="tool drop" aria-label="Results"><svg><use href="#i-spectrum"/></svg><svg class="caret"><use href="#caret"/></svg></button>
        <i class="grip"></i>
        <button class="tool" aria-label="Fit"><svg><use href="#i-fit"/></svg></button>
        <button class="tool" aria-label="Previous view"><svg><use href="#i-back"/></svg></button>
        <button class="tool" aria-label="XY top"><svg><use href="#i-xy"/></svg></button>
        <button class="tool" aria-label="XY bottom"><svg><use href="#i-xy2"/></svg></button>
        <button class="tool" aria-label="XZ left"><svg><use href="#i-zx"/></svg></button>
        <button class="tool" aria-label="XZ right"><svg><use href="#i-xz"/></svg></button>
        <button class="tool" aria-label="YZ rear"><svg><use href="#i-zy"/></svg></button>
        <button class="tool" aria-label="YZ front"><svg><use href="#i-yz"/></svg></button>
        <button class="tool" aria-label="Isometric"><svg><use href="#i-iso"/></svg></button>
        <button class="tool" aria-label="Apply view"><svg><use href="#i-view"/></svg></button>
        <i class="grip"></i>
        <button class="tool" aria-label="Zoom"><svg><use href="#i-zoom"/></svg></button>
        <button class="tool" aria-label="Circle zoom"><svg><use href="#i-zoomw"/></svg></button>
        <button class="tool" aria-label="Rotate"><svg><use href="#i-rotate"/></svg></button>
        <button class="tool" aria-label="Pan"><svg><use href="#i-hand"/></svg></button>
        <button class="tool" aria-label="Rotate left right"><svg><use href="#i-lr"/></svg></button>
        <button class="tool" aria-label="Rotate up down"><svg><use href="#i-ud"/></svg></button>
        <button class="tool" aria-label="Spin"><svg><use href="#i-spin"/></svg></button>
        <i class="grip"></i>
        <button class="tool drop off" aria-label="Undo" disabled><svg><use href="#i-undo"/></svg><svg class="caret"><use href="#caret"/></svg></button>
        <button class="tool drop off" aria-label="Redo" disabled><svg><use href="#i-redo"/></svg><svg class="caret"><use href="#caret"/></svg></button>
    </div>

    <main class="workspace">
        <aside class="browser">
            <div class="tabs">
                <button class="tab">Utility</button>
                <button class="tab">Mask</button>
                <button class="tab active">Model</button>
                <button class="close" aria-label="Close tab"><svg viewBox="0 0 8 8"><path d="M.500 .500l7 7M7.500 .500l-7 7"/></svg></button>
            </div>
            <div class="pane">
                <div class="view-tools">
                    <button class="tool active" aria-label="Model view"><svg><use href="#folder-dark"/></svg></button>
                    <button class="tool" aria-label="Include view"><svg><use href="#i-net"/></svg></button>
                    <button class="tool" aria-label="Component view"><svg><use href="#i-gcomp"/></svg></button>
                    <button class="tool" aria-label="Material view"><svg><use href="#i-gmat"/></svg></button>
                    <button class="tool" aria-label="Property view"><svg><use href="#i-gprop"/></svg></button>
                    <button class="tool" aria-label="Part view"><svg><use href="#i-gcubes"/></svg></button>
                    <button class="tool" aria-label="Beam view"><svg><use href="#i-gbeam"/></svg></button>
                </div>
                <div class="search">
                    <input type="text" aria-label="Search">
                    <svg viewBox="0 0 14 14"><circle cx="6" cy="6" r="4.500"/><path d="M9.500 9.500l3 3"/></svg>
                </div>
                <div class="show-tools">
                    <button class="tool drop" aria-label="Elements and geometry"><svg><use href="#i-both"/></svg><svg class="caret"><use href="#caret"/></svg></button>
                    <button class="tool" aria-label="Show all"><svg><use href="#i-eyetree2"/></svg></button>
                    <button class="tool" aria-label="Show none"><svg><use href="#i-eyetree"/></svg></button>
                    <button class="tool" aria-label="Reverse"><svg><use href="#i-eyerev"/></svg></button>
                    <span class="spacer"></span>
                    <button class="tool drop" aria-label="Entity"><svg><use href="#i-slab"/></svg><svg class="caret"><use href="#caret"/></svg></button>
                    <button class="tool drop" aria-label="Filter"><svg><use href="#i-both"/></svg><svg class="caret"><use href="#caret"/></svg></button>
                    <button class="tool" aria-label="Selector"><svg><use href="#i-cursor"/></svg></button>
                    <button class="tool" aria-label="Highlight"><svg><use href="#i-mark"/></svg></button>
                    <button class="tool" aria-label="Show hide"><svg><use href="#i-eyepm"/></svg></button>
                    <button class="tool" aria-label="Isolate"><svg><use href="#i-eye1"/></svg></button>
                </div>
                <div class="tree">
                    <table>
                        <colgroup><col class="c-name"><col class="c-id"><col class="c-color"><col class="c-inc"><col></colgroup>
                        <thead>
                            <tr><th>Name</th><th class="num">ID</th><th><i class="wheel"></i></th><th class="num">Include</th><th></th></tr>
                        </thead>
                        <tbody>
                            <tr><td colspan="5"><div class="node"><svg class="twig"><use href="#twig-first"/></svg><svg class="ico"><use href="#i-ycomp"/></svg>Components (1)</div></td></tr>
                            <tr><td colspan="5"><div class="node"><svg class="twig"><use href="#twig-open"/></svg><svg class="ico"><use href="#i-yload"/></svg>Load Collectors (2)</div></td></tr>
                            <tr>
                                <td><div class="node leaf"><svg class="twig"><use href="#twig-child"/></svg><svg class="ico"><use href="#t-geo"/></svg><svg class="ico"><use href="#t-mesh"/></svg>SPCADD</div></td>
                                <td class="num id">1</td><td><i class="swatch lime"></i></td><td class="num">0</td><td></td>
                            </tr>
                            <tr class="current">
                                <td><div class="node leaf"><svg class="twig"><use href="#twig-end"/></svg><svg class="ico"><use href="#t-geo"/></svg><svg class="ico"><use href="#t-mesh"/></svg>METHOD</div></td>
                                <td class="num id">2</td><td><i class="swatch cyan"></i></td><td class="num">0</td><td></td>
                            </tr>
                            <tr><td colspan="5"><div class="node"><svg class="twig"><use href="#twig-shut"/></svg><svg class="ico"><use href="#i-ymat"/></svg>Materials (1)</div></td></tr>
                            <tr><td colspan="5"><div class="node"><svg class="twig"><use href="#twig-shut"/></svg><svg class="ico"><use href="#i-yprop"/></svg>Properties (1)</div></td></tr>
                            <tr><td colspan="5"><div class="node"><svg class="twig"><use href="#twig-last"/></svg><svg class="ico"><use href="#i-ytitle"/></svg>Titles (1)</div></td></tr>
                        </tbody>
                    </table>
                    <span class="mark mark-ids"></span>
                </div>
                <div class="pane-foot">
                    <i class="dots"></i>
                    <svg viewBox="0 0 8 8"><path d="M1 4l3-3 3 3M1 7.500l3-3 3 3"/></svg>
                </div>
            </div>
        </aside>

        <section class="work">
            <div class="stage">
                <div class="side-tools">
                    <i class="grip flat"></i>
                    <button class="tool" aria-label="Mask"><svg><use href="#i-v1"/></svg></button>
                    <button class="tool" aria-label="Reverse mask"><svg><use href="#i-v2"/></svg></button>
                    <button class="tool" aria-label="Unmask adjacent"><svg><use href="#i-v3"/></svg></button>
                    <button class="tool" aria-label="Unmask all"><svg><use href="#i-v4"/></svg></button>
                    <button class="tool" aria-label="Mask outside"><svg><use href="#i-v5"/></svg></button>
                    <button class="tool" aria-label="Spherical clipping"><svg><use href="#i-v6"/></svg></button>
                    <button class="tool" aria-label="Find"><svg><use href="#i-v7"/></svg></button>
                    <button class="tool" aria-label="Numbers"><svg><use href="#i-v8"/></svg></button>
                    <button class="tool" aria-label="Scale"><svg><use href="#i-v9"/></svg></button>
                    <button class="tool" aria-label="Element handles"><svg><use href="#i-v10"/></svg></button>
                    <button class="tool active" aria-label="Load handles"><svg><use href="#i-v11"/></svg></button>
                    <button class="tool" aria-label="Visualization"><svg><use href="#i-v12"/></svg></button>
                    <button class="tool" aria-label="Fixed points"><svg><use href="#i-v13"/></svg></button>
                </div>
                <div class="viewport">
                    <svg class="scene" viewBox="528 90 1375 667" xmlns="http://www.w3.org/2000/svg">
                        <!-- top face, 25 x 20 -->
                        <path d="M822 243l486-42 152 220-485 42z" fill="#dcdb08"/>
                        <g transform="matrix(19.430 -1.680 7.640 11 822 243)">
                            <path class="grid" d="M1 0v20m1 0v-20m1 0v20m1 0v-20m1 0v20m1 0v-20m1 0v20m1 0v-20m1 0v20m1 0v-20m1 0v20m1 0v-20m1 0v20m1 0v-20m1 0v20m1 0v-20m1 0v20m1 0v-20m1 0v20m1 0v-20m1 0v20m1 0v-20m1 0v20m1 0v-20M0 1h25m0 1h-25m0 1h25m0 1h-25m0 1h25m0 1h-25m0 1h25m0 1h-25m0 1h25m0 1h-25m0 1h25m0 1h-25m0 1h25m0 1h-25m0 1h25m0 1h-25m0 1h25m0 1h-25m0 1h25"/>
                        </g>
                        <!-- left face, 20 x 10 -->
                        <path d="M822 243l153 220-29 179-153-221z" fill="#d9d807"/>
                        <g transform="matrix(7.650 11 -2.900 17.850 822 243)">
                            <path class="grid" d="M1 0v10m1 0v-10m1 0v10m1 0v-10m1 0v10m1 0v-10m1 0v10m1 0v-10m1 0v10m1 0v-10m1 0v10m1 0v-10m1 0v10m1 0v-10m1 0v10m1 0v-10m1 0v10m1 0v-10m1 0v10M0 1h20m0 1h-20m0 1h20m0 1h-20m0 1h20m0 1h-20m0 1h20m0 1h-20m0 1h20"/>
                        </g>
                        <!-- front face, 25 x 10 -->
                        <path d="M975 463l485-42-28 179-486 42z" fill="#8c8a08"/>
                        <g transform="matrix(19.420 -1.680 -2.870 17.900 975 463)">
                            <path class="grid dark" d="M1 0v10m1 0v-10m1 0v10m1 0v-10m1 0v10m1 0v-10m1 0v10m1 0v-10m1 0v10m1 0v-10m1 0v10m1 0v-10m1 0v10m1 0v-10m1 0v10m1 0v-10m1 0v10m1 0v-10m1 0v10m1 0v-10m1 0v10m1 0v-10m1 0v10m1 0v-10M0 1h25m0 1h-25m0 1h25m0 1h-25m0 1h25m0 1h-25m0 1h25m0 1h-25m0 1h25"/>
                        </g>
                        <path class="edge" d="M822 243l486-42 152 220-28 179-486 42-153-221zM822 243l153 220 485-42M975 463l-29 179"/>
                        <!-- constraints -->
                        <path class="spc" d="M822 243l-9 17h10M793 422l9 17h-19zM975 463l9 18h-18zM946 642l9 18h-18zM1460 421l9 18h-18zM1432 600l9 18h-18z"/>
                        <text x="822" y="242">123456</text>
                        <text x="1307" y="200">123456</text>
                        <text x="975" y="462">123456</text>
                        <text x="1461" y="421">123456</text>
                        <text x="1432" y="599">123456</text>
                        <text x="951" y="641">.23456</text>
                        <!-- triad -->
                        <g class="triad">
                            <path d="M549 708l5-30M550 679l7-21v21zM554 660v19" stroke="#20ff20"/>
                            <path d="M549 708l34-2M583 703l21 1-21 4zM583 706h20" stroke="#f22"/>
                            <path d="M549 709l12 18M559 729l7-3 5 14zM561 727l9 12" stroke="#22f"/>
                        </g>
                        <text x="559" y="648">Y</text>
                        <text x="614" y="702">X</text>
                        <text x="575" y="745">Z</text>
                    </svg>
                    <p class="model-info">Model Info: D:/modal/Acoustic-nastran/normal/normal02.hm</p>
                </div>
            </div>

            <div class="toolbar display-tools">
                <i class="grip"></i>
                <button class="tool" aria-label="Parts"><svg><use href="#i-ycubes"/></svg></button>
                <button class="tool" aria-label="Components"><svg><use href="#i-ycomp"/></svg></button>
                <button class="tool" aria-label="Materials"><svg><use href="#i-ymat"/></svg></button>
                <button class="tool" aria-label="Properties"><svg><use href="#i-yprop"/></svg></button>
                <button class="tool" aria-label="Load collectors"><svg><use href="#i-yload"/></svg></button>
                <button class="tool drop" aria-label="Systems"><svg><use href="#i-ysys"/></svg><svg class="caret"><use href="#caret"/></svg></button>
                <i class="sep"></i>
                <button class="tool" aria-label="Delete"><svg><use href="#i-del"/></svg></button>
                <button class="tool" aria-label="Card edit"><svg><use href="#i-stack"/></svg></button>
                <button class="tool" aria-label="Organize"><svg><use href="#i-move"/></svg></button>
                <button class="tool" aria-label="Renumber"><svg><use href="#i-num"/></svg></button>
                <i class="grip"></i>
                <div class="combo">
                    <svg><use href="#i-auto"/></svg>
                    <select aria-label="Geometry color"><option>Auto</option></select>
                    <span class="combo-arrow"><svg><use href="#caret"/></svg></span>
                </div>
                <button class="tool drop" aria-label="Wireframe geometry"><svg><use href="#i-surfw"/></svg><svg class="caret"><use href="#caret"/></svg></button>
                <button class="tool drop" aria-label="Shaded geometry"><svg><use href="#i-surfb"/></svg><svg class="caret"><use href="#caret"/></svg></button>
                <button class="tool" aria-label="Transparency"><svg><use href="#cube"/></svg></button>
                <i class="sep"></i>
                <div class="combo">
                    <svg><use href="#i-bycomp"/></svg>
                    <select class="wide" aria-label="Element color"><option>By Comp</option></select>
                    <span class="combo-arrow"><svg><use href="#caret"/></svg></span>
                </div>
                <button class="tool drop" aria-label="Wireframe elements"><svg><use href="#i-cubew"/></svg><svg class="caret"><use href="#caret"/></svg></button>
                <button class="tool drop" aria-label="Shaded elements"><svg><use href="#cube-mesh"/></svg><svg class="caret"><use href="#caret"/></svg></button>
                <button class="tool drop" aria-label="1D display"><svg><use href="#i-line"/></svg><svg class="caret"><use href="#caret"/></svg></button>
                <button class="tool drop" aria-label="2D display"><svg><use href="#i-flat"/></svg><svg class="caret"><use href="#caret"/></svg></button>
                <button class="tool drop" aria-label="Layers"><svg><use href="#i-plate"/></svg><svg class="caret"><use href="#caret"/></svg></button>
                <button class="tool" aria-label="Shrink elements"><svg><use href="#i-quads"/></svg></button>
                <button class="tool" aria-label="Options"><svg><use href="#i-monitor"/></svg></button>
                <i class="grip"></i>
                <button class="tool" aria-label="Favorites"><svg><use href="#i-star"/></svg></button>
            </div>

            <form class="panel">
                <div class="name-row">
                    <button type="button" class="key name-key"><span>name</span><span>=</span></button>
                    <input class="field" type="text" value="MODES" aria-label="name">
                    <span class="mark mark-name"><b>1</b></span>
                </div>
                <div class="type-row">
                    <label for="type">type:</label>
                    <div class="picker">
                        <button type="button" class="key" aria-label="Choose type"><svg viewBox="0 0 14 8"><path d="M0 0h14l-7 8z"/></svg></button>
                        <select id="type" class="key"><option>normal modes</option></select>
                        <span class="mark mark-type"><b>2</b></span>
                    </div>
                </div>

                <div class="check-row r3">
                    <div class="check"><input type="checkbox" id="spc" checked><label for="spc">SPC</label><span class="mark mark-spc"><b>3</b></span></div>
                    <div class="value"><button type="button" class="key">=</button><div class="field picked"><input type="text" value="1" aria-label="SPC id"></div><span class="mark mark-value"></span></div>
                </div>
                <div class="check-row r4">
                    <div class="check"><input type="checkbox" id="mpc"><label for="mpc">MPC</label></div>
                </div>
                <div class="check-row r5">
                    <div class="check"><input type="checkbox" id="struct" checked><label for="struct">METHOD(STRUCT)</label><span class="mark mark-struct"><b>4</b></span></div>
                    <div class="value"><button type="button" class="key">=</button><input class="field" type="text" value="2" aria-label="METHOD id"><span class="mark mark-value low"></span></div>
                </div>
                <div class="check-row r6">
                    <div class="check"><input type="checkbox" id="fluid"><label for="fluid">METHOD(FLUID)</label></div>
                </div>
                <div class="check-row r7">
                    <div class="check"><input type="checkbox" id="preload"><label for="preload">STATSUB(PRELOAD)</label></div>
                </div>

                <button type="button" class="cmd green next" disabled>next</button>
                <button type="button" class="cmd green prev" disabled>prev</button>
                <button type="button" class="cmd green create">create</button>
                <button type="button" class="cmd green edit">edit</button>
                <button type="button" class="cmd green update">update</button>
                <button type="button" class="cmd blue review">review</button>
                <button type="button" class="cmd red return">return</button>
            </form>
        </section>
    </main>
</body>

</html>
```

FILE: styles.css
```css
* {
    box-sizing: border-box;
}
body {
    margin: 0;
    height: 100vh;
    display: flex;
    flex-direction: column;
    overflow: hidden;
    background: #f0f0f0;
    color: #111;
    font-family: "Noto Sans", "Open Sans", sans-serif;
    font-size: 17px;
}
button, input, select {
    font: inherit;
    color: inherit;
    margin: 0;
    padding: 0;
    border: 0;
    background: none;
    border-radius: 0;
}
svg {
    display: block;
}
.defs {
    position: absolute;
    width: 0;
    height: 0;
}
.sprite {
    display: none;
}

/* title bar and menu */
.titlebar {
    display: flex;
    align-items: center;
    height: 27px;
    flex: none;
    padding-left: 1px;
    background: linear-gradient(90deg, #edf3f9, #f3f1f7 70%, #f0f3f9);
}
.titlebar h1 {
    margin: 0 0 2px 7px;
    font-size: 14px;
    font-weight: normal;
}
.logo {
    width: 18px;
    height: 18px;
}
.window-buttons {
    display: flex;
    margin-left: auto;
}
.window-buttons button {
    display: flex;
    justify-content: center;
    width: 58px;
}
.window-buttons button:last-child {
    width: 36px;
    margin-left: 11px;
}
.window-buttons svg {
    width: 14px;
    height: 14px;
    margin-bottom: 3px;
    fill: none;
    stroke: #111;
}
.menubar {
    display: flex;
    flex: none;
    gap: 17px;
    height: 23px;
    padding-left: 7px;
    background: #fff;
    font-size: 16px;
    line-height: 25px;
}
.menubar a {
    color: #111;
    text-decoration: none;
}

/* toolbars */
.toolbar {
    display: flex;
    flex: none;
    align-items: center;
    gap: 4px;
    height: 40px;
    padding-bottom: 2px;
}
.tool {
    display: flex;
    align-items: center;
    justify-content: center;
    flex: none;
    height: 24px;
    width: 24px;
}
.tool svg {
    width: 24px;
    height: 24px;
    flex: none;
}
.tool.drop {
    width: 34px;
    justify-content: flex-start;
}
.tool svg.caret {
    width: 12px;
}
.off .caret {
    fill: #b4b4b8;
}
.grip {
    flex: none;
    width: 2px;
    height: 20px;
    margin: 0 5px;
    background: repeating-linear-gradient(#555 0 2px, transparent 2px 6px);
}
.grip.flat {
    width: 20px;
    height: 2px;
    background: repeating-linear-gradient(90deg, #555 0 2px, transparent 2px 6px);
}
.sep {
    flex: none;
    width: 1px;
    height: 20px;
    margin: 0 4px;
    background: #aaa;
}
.main-tools .grip:first-child {
    margin: 0 3px 0 4px;
}
.ax-r { stroke: #f03030; fill: #f03030; }
.ax-g { stroke: #10c020; fill: #10c020; }
.ax-b { stroke: #3848e0; fill: #3848e0; }
.ax-t, .ic-t {
    font: bold 9px "Liberation Sans", sans-serif;
    fill: #555;
}
.ic-n {
    font: 8px "Liberation Sans", sans-serif;
    fill: #111;
}
.ic-s {
    font: bold 9px "Liberation Serif", serif;
}

/* left browser */
.workspace {
    flex: 1;
    min-height: 0;
    display: grid;
    grid-template-columns: 472px 1fr;
}
.browser {
    display: flex;
    flex-direction: column;
    min-height: 0;
    padding: 0 8px 0 2px;
}
.tabs {
    position: relative;
    display: flex;
    align-items: flex-end;
    gap: 2px;
    height: 28px;
    font-family: "Liberation Sans", Arial, sans-serif;
    font-size: 14px;
}
.tab {
    width: 58px;
    height: 26px;
    padding: 3px 6px 0 0;
    border-top: 1px solid #fff;
    border-left: 1px solid #fff;
    border-right: 1px solid #555;
}
.tab.active {
    width: 62px;
    height: 28px;
    font-weight: bold;
}
.close {
    position: absolute;
    right: 2px;
    top: -5px;
}
.close svg {
    width: 8px;
    height: 8px;
    stroke: #111;
}
.pane {
    flex: 1;
    min-height: 0;
    display: flex;
    flex-direction: column;
    padding-right: 1px;
    border-top: 1px solid #fff;
    border-right: 1px solid #666;
}
.view-tools {
    display: flex;
    height: 36px;
    padding: 1px 2px;
}
.view-tools .tool {
    width: 30px;
    height: 30px;
}
.view-tools .active {
    background: #ffc580;
    border: 1px solid #999;
}
.search {
    display: flex;
    align-items: center;
    height: 18px;
    padding-right: 2px;
    border: 1px solid #a9b6c2;
    background: #fff;
    font-size: 13px;
}
.search input {
    flex: 1;
    height: 16px;
}
.search svg {
    width: 13px;
    height: 13px;
    fill: none;
    stroke: #555;
}
.show-tools {
    display: flex;
    align-items: center;
    gap: 6px;
    height: 39px;
    padding: 0 5px 0 3px;
}
.show-tools .tool.drop {
    width: 33px;
}
.show-tools .spacer + .drop {
    margin-right: -4px;
}
.spacer {
    flex: 1;
}
.tree {
    position: relative;
    flex: 1;
    min-height: 0;
    border: 1px solid #a9b6c2;
    background: #fff;
    color: #333;
    font-family: "Liberation Mono", "Courier New", monospace;
    font-size: 13px;
}
.tree table {
    width: 100%;
    table-layout: fixed;
    border-collapse: separate;
    border-spacing: 0;
}
.c-name { width: 197px; }
.c-id { width: 25px; }
.c-color { width: 25px; }
.c-inc { width: 60px; }
.tree th {
    height: 22px;
    padding: 3px 2px 0 2px;
    border-right: 1px solid #a9b6c2;
    border-bottom: 1px solid #a9b6c2;
    background: #f0f0f0;
    color: #111;
    font-weight: normal;
    text-align: left;
}
.tree th:last-child {
    border-right: 0;
}
.tree td {
    height: 22px;
    padding: 0 4px 0 0;
    line-height: 22px;
}
.tree .num {
    text-align: right;
}
.tree .id {
    padding-right: 5px;
}
.node {
    display: flex;
    align-items: center;
    gap: 4px;
    height: 22px;
    white-space: nowrap;
}
.node .twig {
    width: 20px;
    height: 22px;
    margin-right: -4px;
}
.node .ico {
    width: 16px;
    height: 16px;
}
.leaf .twig {
    width: 41px;
    margin-right: -4px;
}
.leaf .ico + .ico {
    margin-left: -2px;
    margin-right: 2px;
}
.current {
    font-weight: bold;
}
.wheel {
    display: block;
    width: 14px;
    height: 14px;
    margin-left: 1px;
    border-radius: 50%;
    background: conic-gradient(#0f0, #0cf, #00f, #f0f, #f00, #fc0, #0f0);
}
.swatch {
    display: block;
    width: 14px;
    height: 14px;
    margin-left: 5px;
    border: 1px solid #000;
}
.lime { background: #0f0; }
.cyan { background: #0ff; }
.pane-foot {
    display: flex;
    justify-content: flex-end;
    height: 13px;
    padding: 2px 7px 0 19px;
}
.pane-foot svg {
    width: 8px;
    height: 8px;
    fill: none;
    stroke: #444;
}
.dots {
    width: 18px;
    height: 2px;
    margin: 0 auto;
    background: repeating-linear-gradient(90deg, #777 0 2px, transparent 2px 8px);
}

/* graphics area */
.work {
    display: flex;
    flex-direction: column;
    min-width: 0;
    padding-left: 3px;
    border-left: 1px solid #000;
}
.stage {
    flex: 1;
    min-height: 0;
    display: flex;
}
.side-tools {
    display: flex;
    flex-direction: column;
    align-items: center;
    gap: 4px;
    width: 52px;
    padding-right: 4px;
}
.side-tools .grip {
    margin: 6px 0 2px;
}
.side-tools .active {
    background: linear-gradient(#fbeedd, #ffb868);
    outline: 1px solid #888;
}
.viewport {
    position: relative;
    flex: 1;
    min-width: 0;
    background: linear-gradient(#2b557d, #a1a1a1);
}
.scene {
    position: absolute;
    inset: 0;
    width: 100%;
    height: 100%;
}
.scene text {
    fill: #fff;
    font-size: 17px;
}
.grid {
    fill: none;
    stroke: #85840c;
    vector-effect: non-scaling-stroke;
}
.grid.dark {
    stroke: #6c6a06;
}
.edge {
    fill: none;
    stroke: #1c1c08;
}
.spc {
    fill: none;
    stroke: #0f0;
    stroke-width: 2;
}
.triad {
    fill: none;
}
.model-info {
    position: absolute;
    top: 3px;
    right: 3px;
    margin: 0;
    color: #fff;
    line-height: 24px;
}

/* combos in the display toolbar */
.display-tools .grip {
    margin: 0 4px;
}
.display-tools .grip:first-child {
    margin-left: 5px;
}
.combo {
    position: relative;
    display: flex;
    align-items: center;
    height: 26px;
    margin: 0 -2px;
    background: #fff;
    font-family: "Liberation Sans", Arial, sans-serif;
    font-size: 14px;
}
.combo > svg {
    width: 20px;
    height: 24px;
}
.combo select {
    width: 90px;
    height: 24px;
    appearance: none;
}
.combo select.wide {
    width: 96px;
}
.combo-arrow {
    position: absolute;
    right: 1px;
    top: 1px;
    width: 16px;
    height: 24px;
    padding-left: 2px;
    background: #f0f0f0;
    pointer-events: none;
}
.combo-arrow svg {
    width: 12px;
    height: 24px;
}

/* load step panel */
.panel {
    display: grid;
    flex: none;
    grid-template-columns: 500px 1fr 79px 19px 19px 110px;
    grid-template-rows: repeat(7, 25px);
    padding: 10px 0 4px;
    margin-bottom: 1px;
    border-bottom: 1px solid #000;
}
.key {
    height: 25px;
    border: 1px solid;
    border-color: #fff #777 #777 #fff;
    border-bottom-width: 2px;
    background: #eee;
    text-align: center;
    line-height: 22px;
}
.field {
    height: 24px;
    padding: 0 6px;
    border: 1px solid;
    border-color: #777 #fff #fff #777;
    border-left-width: 3px;
    background: #fff;
}
.name-row, .type-row, .picker, .check-row, .check, .value {
    position: relative;
    display: flex;
}
.name-row {
    grid-area: 1 / 1;
}
.name-key {
    display: flex;
    width: 179px;
    padding-left: 49px;
    gap: 29px;
}
.name-row .field {
    width: 261px;
}
.type-row {
    grid-area: 1 / 2;
    justify-content: flex-end;
    gap: 20px;
    padding-right: 80px;
    line-height: 23px;
}
.picker button {
    display: flex;
    align-items: center;
    justify-content: center;
    width: 40px;
}
.picker svg {
    width: 14px;
    height: 8px;
}
.picker select {
    width: 340px;
    padding-right: 68px;
    appearance: none;
    text-align-last: center;
}
.check-row {
    grid-column: 1;
    padding-left: 8px;
}
.r3 { grid-row: 3; }
.r4 { grid-row: 4; }
.r5 { grid-row: 5; }
.r6 { grid-row: 6; }
.r7 { grid-row: 7; }
.check {
    align-items: center;
    gap: 11px;
    width: 212px;
}
.check label {
    padding-bottom: 2px;
    line-height: 22px;
}
.check input {
    appearance: none;
    width: 19px;
    height: 19px;
    margin-left: 3px;
    border: 1px solid;
    border-color: #777 #fff #fff #777;
    background: #fff;
}
.check input:checked {
    display: grid;
    place-items: center;
}
.check input:checked::before {
    content: "";
    width: 12px;
    height: 10px;
    background: #000;
    clip-path: polygon(0 40%, 33% 70%, 100% 0, 100% 30%, 33% 100%, 0 70%);
}
.value .key {
    width: 60px;
    padding-left: 3px;
}
.value .field {
    width: 220px;
    text-align: right;
    padding-right: 2px;
}
.picked {
    display: flex;
    justify-content: flex-end;
    align-items: center;
}
.value .picked {
    padding-right: 1px;
}
.picked input {
    width: 12px;
    height: 22px;
    background: #0078d7;
    color: #fff;
    text-align: center;
}
.cmd {
    height: 25px;
    padding-left: 8px;
    border: 1px solid;
    border-bottom-width: 2px;
    line-height: 20px;
}
.green {
    background: #60c060;
    border-color: #90e090 #306830 #306830 #90e090;
}
.blue {
    background: #6c80dc;
    border-color: #98a8f0 #384a90 #384a90 #98a8f0;
}
.red {
    background: #c06060;
    border-color: #e09090 #703030 #703030 #e09090;
}
.cmd:disabled {
    color: #247024;
    text-shadow: 1px 1px #84d884;
}
.next { grid-area: 4 / 3; }
.prev { grid-area: 5 / 3; }
.create {
    grid-area: 1 / 6;
    outline: 1px solid #000;
    outline-offset: -2px;
}
.edit { grid-area: 2 / 6; }
.update { grid-area: 3 / 6; }
.review { grid-area: 4 / 6; }
.return {
    grid-area: 7 / 5 / 8 / 7;
    margin-right: 15px;
    padding-left: 4px;
}

/* callouts drawn over the window */
.mark {
    position: absolute;
    border: 2px solid #ed1c24;
    pointer-events: none;
}
.mark b {
    position: absolute;
    color: #ed1c24;
    font-size: 34px;
    line-height: 34px;
}
.mark-ids {
    left: 204px;
    top: 59px;
    width: 51px;
    height: 55px;
    border-color: #ff7f27;
}
.mark-name {
    left: 173px;
    top: -4px;
    width: 160px;
    height: 27px;
}
.mark-name b {
    right: 164px;
    top: -15px;
}
.mark-type {
    inset: -8px -9px -6px -6px;
}
.mark-type b {
    right: 403px;
    top: -15px;
}
.mark-spc {
    left: 1px;
    top: -3px;
    width: 70px;
    height: 29px;
}
.mark-spc b {
    right: 78px;
    top: -8px;
}
.mark-struct {
    left: -2px;
    top: 1px;
    width: 182px;
    height: 24px;
}
.mark-struct b {
    right: 187px;
    top: -8px;
}
.mark-value {
    inset: -5px -6px -5px -5px;
}
.mark-value.low {
    inset: -1px -6px 0 -5px;
}
```
